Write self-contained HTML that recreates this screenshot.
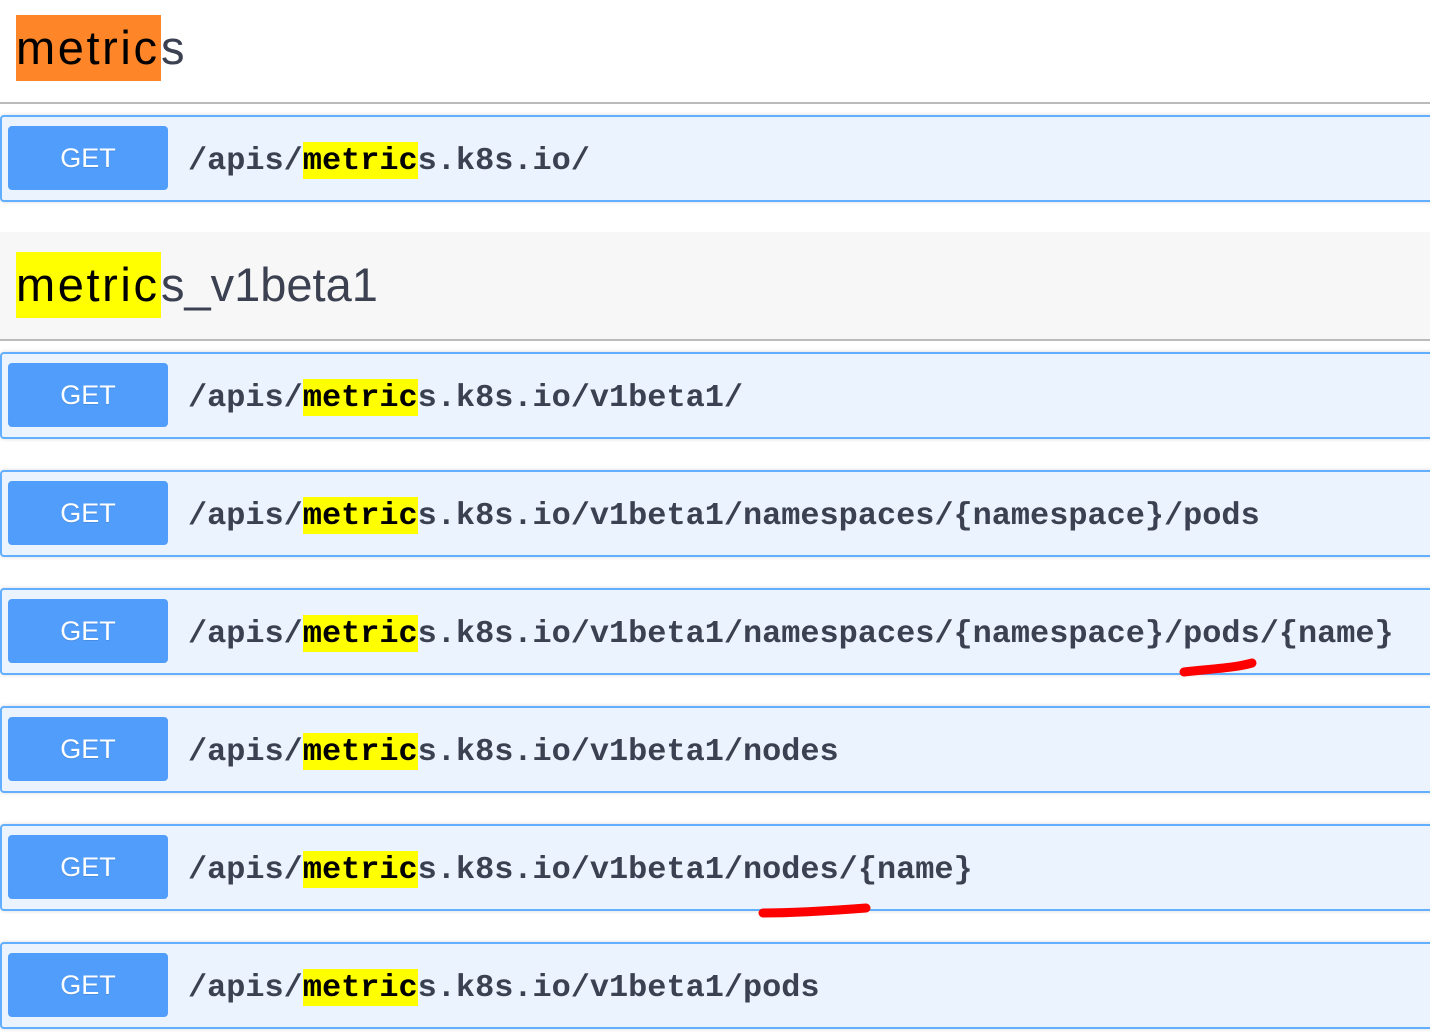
<!DOCTYPE html>
<html><head><meta charset="utf-8"><style>
body{margin:0;width:1430px;height:1024px;background:#fff;position:relative;overflow:hidden;font-family:"Liberation Sans",sans-serif;}
.h{position:absolute;left:0;width:1430px;border-bottom:2px solid #bbb;}
.h span.t{position:absolute;left:16px;font-size:47px;color:#3b4151;line-height:66px;}
.h b{font-weight:normal;color:#000;display:inline-block;width:145px;letter-spacing:2.6px;}
.row{position:absolute;left:0;width:1440px;height:87px;box-sizing:border-box;background:#ebf3fe;border:2px solid #61affe;border-radius:4px;box-shadow:0 0 4px rgba(0,0,0,.15);}
.btn{position:absolute;left:6px;top:9px;width:160px;height:64px;background:#519dfb;border-radius:4px;color:#fff;font-size:27px;text-align:center;line-height:64px;text-shadow:0 1px 0 rgba(0,0,0,.1);}
.p{position:absolute;left:186px;top:0;line-height:88px;font-family:"Liberation Mono",monospace;font-weight:bold;font-size:31.9px;color:#3b4151;white-space:pre;}
.p b{background:#ffff00;color:#000;}
</style></head><body>
<div class="h" style="top:0;height:102px;"><span class="t" style="top:15px;"><b style="background:#fe8629">metric</b>s</span></div>
<div class="row" style="top:115px"><div class="btn">GET</div><div class="p">/apis/<b>metric</b>s.k8s.io/</div></div>
<div class="h" style="top:232px;height:107px;background:#f7f7f7;"><span class="t" style="top:20px;"><b style="background:#ffff00">metric</b>s_v1beta1</span></div>
<div class="row" style="top:352px"><div class="btn">GET</div><div class="p">/apis/<b>metric</b>s.k8s.io/v1beta1/</div></div>
<div class="row" style="top:470px"><div class="btn">GET</div><div class="p">/apis/<b>metric</b>s.k8s.io/v1beta1/namespaces/{namespace}/pods</div></div>
<div class="row" style="top:588px"><div class="btn">GET</div><div class="p">/apis/<b>metric</b>s.k8s.io/v1beta1/namespaces/{namespace}/pods/{name}</div></div>
<div class="row" style="top:706px"><div class="btn">GET</div><div class="p">/apis/<b>metric</b>s.k8s.io/v1beta1/nodes</div></div>
<div class="row" style="top:824px"><div class="btn">GET</div><div class="p">/apis/<b>metric</b>s.k8s.io/v1beta1/nodes/{name}</div></div>
<div class="row" style="top:942px"><div class="btn">GET</div><div class="p">/apis/<b>metric</b>s.k8s.io/v1beta1/pods</div></div>
<svg style="position:absolute;left:0;top:0" width="1430" height="1024"><path d="M1184 672 C1210 669 1235 668 1252 663" stroke="#f00" stroke-width="9" stroke-linecap="round" fill="none"/><path d="M763 913 C800 913 840 910 866 908" stroke="#f00" stroke-width="9" stroke-linecap="round" fill="none"/></svg>
</body></html>
